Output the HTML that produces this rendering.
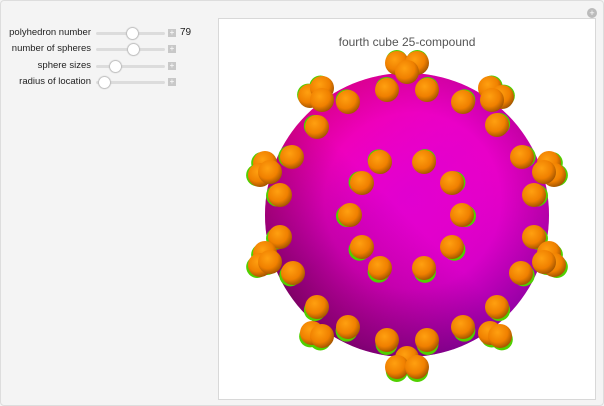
<!DOCTYPE html>
<html><head><style>
body{margin:0;width:604px;height:406px;background:#f4f4f4;font-family:"Liberation Sans",sans-serif;position:relative;overflow:hidden}
.lbl{position:absolute;right:513px;font-size:9.5px;color:#222;white-space:nowrap}
.trk{position:absolute;left:96px;width:69px;height:3px;background:#dcdcdc;border-radius:2px}
.th{position:absolute;width:11px;height:11px;border-radius:50%;background:#fff;box-shadow:0 0 1px 1px #bbb}
.pl{position:absolute;left:168px;width:8px;height:8px;background:#c8c8c8;color:#fff;font-size:8px;line-height:8px;text-align:center}
</style></head><body>
<div style="position:absolute;left:0;top:0;width:604px;height:406px;border:1px solid #ddd;box-sizing:border-box;border-radius:4px"></div>
<div style="position:absolute;left:587px;top:8px;width:10px;height:10px;border-radius:50%;background:#bbb;color:#fff;font-size:9px;line-height:10px;text-align:center">+</div>
<div class="lbl" style="top:27px">polyhedron number</div>
<div class="lbl" style="top:43px">number of spheres</div>
<div class="lbl" style="top:60px">sphere sizes</div>
<div class="lbl" style="top:76px">radius of location</div>
<div class="trk" style="top:32px"></div><div class="trk" style="top:48px"></div><div class="trk" style="top:65px"></div><div class="trk" style="top:81px"></div>
<div class="th" style="left:127px;top:28px"></div><div class="th" style="left:128px;top:44px"></div><div class="th" style="left:110px;top:61px"></div><div class="th" style="left:99px;top:77px"></div>
<div class="pl" style="top:29px">+</div><div class="pl" style="top:45px">+</div><div class="pl" style="top:62px">+</div><div class="pl" style="top:78px">+</div>
<div style="position:absolute;left:180px;top:27px;font-size:10px;color:#222">79</div>
<div style="position:absolute;left:218px;top:18px;width:378px;height:382px;background:#fff;border:1px solid #d8d8d8;box-sizing:border-box"></div>
<div style="position:absolute;left:218px;top:35px;width:378px;text-align:center;font-size:12px;color:#555">fourth cube 25-compound</div>
<svg style="position:absolute;left:0;top:0" width="604" height="406">
<defs>
<radialGradient id="s" cx="0.52" cy="0.45" r="0.62"><stop offset="0" stop-color="#e000d0"/><stop offset="0.5" stop-color="#e800c8"/><stop offset="0.85" stop-color="#b00090"/><stop offset="1" stop-color="#800070"/></radialGradient>
<linearGradient id="t" x1="0.1" y1="0" x2="0.9" y2="1"><stop offset="0" stop-color="#ff0060" stop-opacity=".6"/><stop offset="0.45" stop-color="#ff00cc" stop-opacity="0"/><stop offset="1" stop-color="#5000c0" stop-opacity=".55"/></linearGradient>
<linearGradient id="u" x1="1" y1="0" x2="0" y2="1"><stop offset="0.5" stop-color="#000" stop-opacity="0"/><stop offset="1" stop-color="#300020" stop-opacity=".45"/></linearGradient>
<radialGradient id="b" cx="0.4" cy="0.35" r="0.7"><stop offset="0" stop-color="#ffa010"/><stop offset="0.6" stop-color="#f08000"/><stop offset="1" stop-color="#9a5000"/></radialGradient>
</defs>
<circle cx="407" cy="215" r="142" fill="url(#s)"/>
<circle cx="407" cy="215" r="142" fill="url(#t)"/>
<circle cx="407" cy="215" r="142" fill="url(#u)"/>
<g id="g"></g>
</svg>
<script>
var P=[[380,162],[424,162],[362,183],[452,183],[350,215],[462,215],[362,247],[452,247],[380,268],[424,268],
[397,63],[417,63],[407,72],[387,90],[427,90],[310,96],[322,88],[322,100],[348,102],[317,127],
[490,88],[502,97],[492,100],[463,102],[497,125],
[265,163],[260,175],[270,172],[292,157],[280,195],[280,237],[265,253],[260,265],[270,262],[293,273],
[549,163],[554,175],[544,172],[522,157],[534,195],[534,237],[549,253],[554,265],[544,262],[521,273],
[317,307],[312,333],[322,336],[348,327],[387,340],[427,340],[463,327],[497,307],[490,333],[500,336],
[407,358],[397,367],[417,367]];
var s='';
P.forEach(function(p){var dx=p[0]-407,dy=p[1]-215,d=Math.hypot(dx,dy)||1;var gx=p[0]+dx/d*3,gy=p[1]+dy/d*3+1;
s+='<ellipse cx="'+gx+'" cy="'+gy+'" rx="11" ry="11" fill="#50d000"/>';});
P.forEach(function(p){s+='<circle cx="'+p[0]+'" cy="'+p[1]+'" r="12" fill="url(#b)"/>';});
document.getElementById('g').innerHTML=s;
</script>
</body></html>
